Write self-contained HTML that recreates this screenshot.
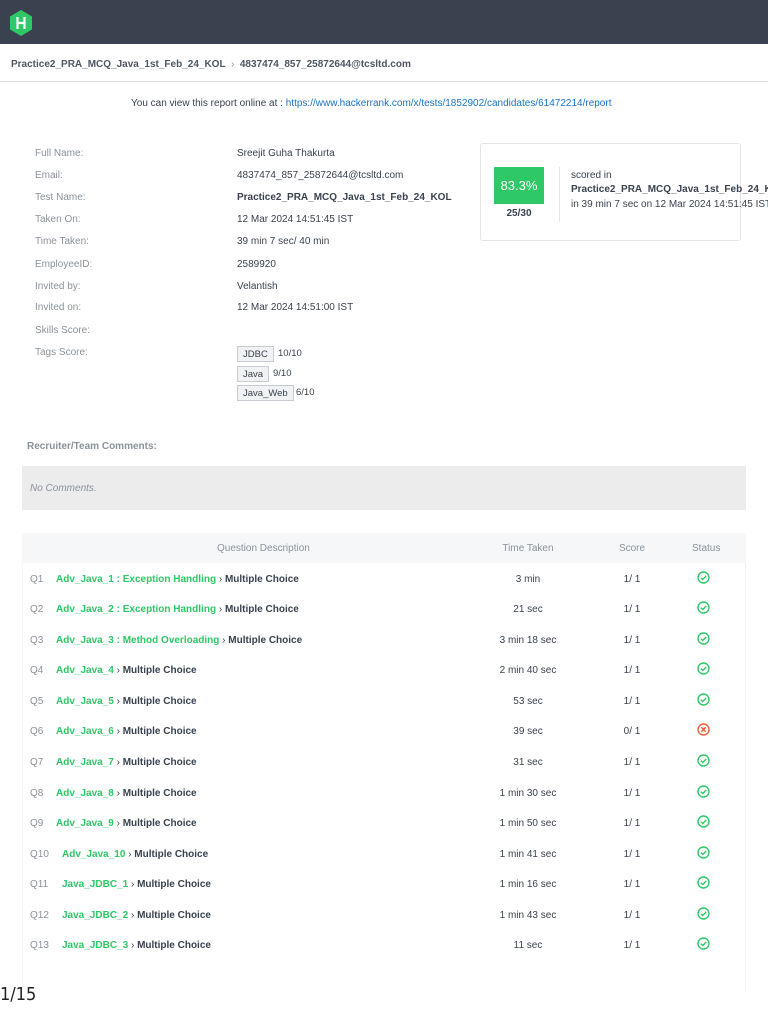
<!DOCTYPE html>
<html><head><meta charset="utf-8"><style>
*{margin:0;padding:0;box-sizing:border-box}
body{width:768px;height:1024px;position:relative;background:#fff;font-family:"Liberation Sans",Arial,sans-serif;overflow:hidden;color:#39424e}
.a{position:absolute;white-space:nowrap}
.hdr{left:0;top:0;width:768px;height:44px;background:#39424e}
.lbl{left:35px;font-size:10px;color:#8a929c}
.val{left:237px;font-size:10px;color:#39424e}
.tag{left:237px;height:16px;border:1px solid #c8cbcf;background:#f1f2f3;font-size:9.5px;padding:2px 5px;color:#39424e}
.tv{font-size:9.5px}
.row{left:22px;width:723px;height:30px;font-size:10px}
.q{position:absolute;left:8px;top:11px;color:#8a929c}
.t{position:absolute;top:11px;color:#2ec866;font-weight:bold}
.m{color:#39424e;font-weight:bold}
.tm{position:absolute;left:456px;width:100px;text-align:center;top:11px}
.sc{position:absolute;left:560px;width:100px;text-align:center;top:11px}
.st{position:absolute;left:675px;top:8px}
</style></head><body>
<div class="a hdr"></div>
<svg class="a" style="left:10px;top:10px" width="22" height="26" viewBox="0 0 22 26"><polygon points="11,0 22,6.5 22,19.5 11,26 0,19.5 0,6.5" fill="#2ec866"/><path d="M7.5 7v12M14.5 7v12M7.5 13h7" stroke="#fff" stroke-width="2.2"/></svg>
<div class="a" style="left:11px;top:59px;font-size:10px;font-weight:bold;color:#4d5661">Practice2_PRA_MCQ_Java_1st_Feb_24_KOL &nbsp;<span style="color:#8a929c;font-weight:normal">›</span>&nbsp; 4837474_857_25872644@tcsltd.com</div>
<div class="a" style="left:0;top:81px;width:768px;height:1px;background:#dcdfe3"></div>
<div class="a" style="left:131px;top:98px;font-size:10px;color:#39424e">You can view this report online at : <span style="color:#1a73c9">https://www.hackerrank.com/x/tests/1852902/candidates/61472214/report</span></div>

<div class="a lbl" style="top:148px">Full Name:</div><div class="a val" style="top:148px">Sreejit Guha Thakurta</div>
<div class="a lbl" style="top:170px">Email:</div><div class="a val" style="top:170px">4837474_857_25872644@tcsltd.com</div>
<div class="a lbl" style="top:192px">Test Name:</div><div class="a val" style="top:192px;font-weight:bold">Practice2_PRA_MCQ_Java_1st_Feb_24_KOL</div>
<div class="a lbl" style="top:214px">Taken On:</div><div class="a val" style="top:214px">12 Mar 2024 14:51:45 IST</div>
<div class="a lbl" style="top:236px">Time Taken:</div><div class="a val" style="top:236px">39 min 7 sec/ 40 min</div>
<div class="a lbl" style="top:259px">EmployeeID:</div><div class="a val" style="top:259px">2589920</div>
<div class="a lbl" style="top:281px">Invited by:</div><div class="a val" style="top:281px">Velantish</div>
<div class="a lbl" style="top:302px">Invited on:</div><div class="a val" style="top:302px">12 Mar 2024 14:51:00 IST</div>
<div class="a lbl" style="top:325px">Skills Score:</div>
<div class="a lbl" style="top:347px">Tags Score:</div>
<div class="a tag" style="top:346px">JDBC</div><div class="a tv" style="left:278px;top:348px">10/10</div>
<div class="a tag" style="top:366px">Java</div><div class="a tv" style="left:273px;top:368px">9/10</div>
<div class="a tag" style="top:385px">Java_Web</div><div class="a tv" style="left:296px;top:387px">6/10</div>

<div class="a" style="left:480px;top:143px;width:261px;height:98px;border:1px solid #e3e5e8;border-radius:3px"></div>
<div class="a" style="left:494px;top:167px;width:50px;height:37px;background:#2ec866;color:#fff;font-size:13px;text-align:center;line-height:37px">83.3%</div>
<div class="a" style="left:494px;top:208px;width:50px;text-align:center;font-size:10px;font-weight:bold">25/30</div>
<div class="a" style="left:559px;top:167px;width:1px;height:55px;background:#e3e5e8"></div>
<div class="a" style="left:571px;top:170px;font-size:10px">scored in</div>
<div class="a" style="left:571px;top:184px;font-size:10px;font-weight:bold">Practice2_PRA_MCQ_Java_1st_Feb_24_KOL</div>
<div class="a" style="left:571px;top:199px;font-size:10px">in 39 min 7 sec on 12 Mar 2024 14:51:45 IST</div>

<div class="a" style="left:27px;top:441px;font-size:10px;font-weight:bold;color:#8a929c">Recruiter/Team Comments:</div>
<div class="a" style="left:22px;top:466px;width:724px;height:44px;background:#ececed"></div>
<div class="a" style="left:30px;top:483px;font-size:10px;font-style:italic;color:#8a929c">No Comments.</div>

<div class="a" style="left:22px;top:533px;width:724px;height:457px;border-right:1px solid #f0f1f2;border-left:1px solid #f6f7f8"></div>
<div class="a" style="left:22px;top:533px;width:724px;height:30px;background:#f6f7f8;font-size:10px;color:#8a929c">
<span style="position:absolute;left:195px;top:10px">Question Description</span>
<span style="position:absolute;left:456px;width:100px;text-align:center;top:10px">Time Taken</span>
<span style="position:absolute;left:560px;width:100px;text-align:center;top:10px">Score</span>
<span style="position:absolute;left:670px;top:10px">Status</span></div>

<div class="a row" style="top:563px"><span class="q">Q1</span><span class="t" style="left:34px">Adv_Java_1 : Exception Handling<span style="color:#39424e;font-weight:normal"> › </span><span class="m">Multiple Choice</span></span><span class="tm">3 min</span><span class="sc">1/ 1</span><span class="st"><svg width="13" height="13" viewBox="0 0 13 13"><circle cx="6.5" cy="6.5" r="5.5" fill="none" stroke="#2ec866" stroke-width="1.4"/><path d="M4 6.7l1.8 1.8L9.2 5" fill="none" stroke="#2ec866" stroke-width="1.4"/></svg></span></div>
<div class="a row" style="top:593px"><span class="q">Q2</span><span class="t" style="left:34px">Adv_Java_2 : Exception Handling<span style="color:#39424e;font-weight:normal"> › </span><span class="m">Multiple Choice</span></span><span class="tm">21 sec</span><span class="sc">1/ 1</span><span class="st"><svg width="13" height="13" viewBox="0 0 13 13"><circle cx="6.5" cy="6.5" r="5.5" fill="none" stroke="#2ec866" stroke-width="1.4"/><path d="M4 6.7l1.8 1.8L9.2 5" fill="none" stroke="#2ec866" stroke-width="1.4"/></svg></span></div>
<div class="a row" style="top:624px"><span class="q">Q3</span><span class="t" style="left:34px">Adv_Java_3 : Method Overloading<span style="color:#39424e;font-weight:normal"> › </span><span class="m">Multiple Choice</span></span><span class="tm">3 min 18 sec</span><span class="sc">1/ 1</span><span class="st"><svg width="13" height="13" viewBox="0 0 13 13"><circle cx="6.5" cy="6.5" r="5.5" fill="none" stroke="#2ec866" stroke-width="1.4"/><path d="M4 6.7l1.8 1.8L9.2 5" fill="none" stroke="#2ec866" stroke-width="1.4"/></svg></span></div>
<div class="a row" style="top:654px"><span class="q">Q4</span><span class="t" style="left:34px">Adv_Java_4<span style="color:#39424e;font-weight:normal"> › </span><span class="m">Multiple Choice</span></span><span class="tm">2 min 40 sec</span><span class="sc">1/ 1</span><span class="st"><svg width="13" height="13" viewBox="0 0 13 13"><circle cx="6.5" cy="6.5" r="5.5" fill="none" stroke="#2ec866" stroke-width="1.4"/><path d="M4 6.7l1.8 1.8L9.2 5" fill="none" stroke="#2ec866" stroke-width="1.4"/></svg></span></div>
<div class="a row" style="top:685px"><span class="q">Q5</span><span class="t" style="left:34px">Adv_Java_5<span style="color:#39424e;font-weight:normal"> › </span><span class="m">Multiple Choice</span></span><span class="tm">53 sec</span><span class="sc">1/ 1</span><span class="st"><svg width="13" height="13" viewBox="0 0 13 13"><circle cx="6.5" cy="6.5" r="5.5" fill="none" stroke="#2ec866" stroke-width="1.4"/><path d="M4 6.7l1.8 1.8L9.2 5" fill="none" stroke="#2ec866" stroke-width="1.4"/></svg></span></div>
<div class="a row" style="top:715px"><span class="q">Q6</span><span class="t" style="left:34px">Adv_Java_6<span style="color:#39424e;font-weight:normal"> › </span><span class="m">Multiple Choice</span></span><span class="tm">39 sec</span><span class="sc">0/ 1</span><span class="st"><svg width="13" height="13" viewBox="0 0 13 13"><circle cx="6.5" cy="6.5" r="5.5" fill="none" stroke="#f25c3c" stroke-width="1.4"/><path d="M4.3 4.3l4.4 4.4M8.7 4.3l-4.4 4.4" stroke="#f25c3c" stroke-width="1.4"/></svg></span></div>
<div class="a row" style="top:746px"><span class="q">Q7</span><span class="t" style="left:34px">Adv_Java_7<span style="color:#39424e;font-weight:normal"> › </span><span class="m">Multiple Choice</span></span><span class="tm">31 sec</span><span class="sc">1/ 1</span><span class="st"><svg width="13" height="13" viewBox="0 0 13 13"><circle cx="6.5" cy="6.5" r="5.5" fill="none" stroke="#2ec866" stroke-width="1.4"/><path d="M4 6.7l1.8 1.8L9.2 5" fill="none" stroke="#2ec866" stroke-width="1.4"/></svg></span></div>
<div class="a row" style="top:777px"><span class="q">Q8</span><span class="t" style="left:34px">Adv_Java_8<span style="color:#39424e;font-weight:normal"> › </span><span class="m">Multiple Choice</span></span><span class="tm">1 min 30 sec</span><span class="sc">1/ 1</span><span class="st"><svg width="13" height="13" viewBox="0 0 13 13"><circle cx="6.5" cy="6.5" r="5.5" fill="none" stroke="#2ec866" stroke-width="1.4"/><path d="M4 6.7l1.8 1.8L9.2 5" fill="none" stroke="#2ec866" stroke-width="1.4"/></svg></span></div>
<div class="a row" style="top:807px"><span class="q">Q9</span><span class="t" style="left:34px">Adv_Java_9<span style="color:#39424e;font-weight:normal"> › </span><span class="m">Multiple Choice</span></span><span class="tm">1 min 50 sec</span><span class="sc">1/ 1</span><span class="st"><svg width="13" height="13" viewBox="0 0 13 13"><circle cx="6.5" cy="6.5" r="5.5" fill="none" stroke="#2ec866" stroke-width="1.4"/><path d="M4 6.7l1.8 1.8L9.2 5" fill="none" stroke="#2ec866" stroke-width="1.4"/></svg></span></div>
<div class="a row" style="top:838px"><span class="q">Q10</span><span class="t" style="left:40px">Adv_Java_10<span style="color:#39424e;font-weight:normal"> › </span><span class="m">Multiple Choice</span></span><span class="tm">1 min 41 sec</span><span class="sc">1/ 1</span><span class="st"><svg width="13" height="13" viewBox="0 0 13 13"><circle cx="6.5" cy="6.5" r="5.5" fill="none" stroke="#2ec866" stroke-width="1.4"/><path d="M4 6.7l1.8 1.8L9.2 5" fill="none" stroke="#2ec866" stroke-width="1.4"/></svg></span></div>
<div class="a row" style="top:868px"><span class="q">Q11</span><span class="t" style="left:40px">Java_JDBC_1<span style="color:#39424e;font-weight:normal"> › </span><span class="m">Multiple Choice</span></span><span class="tm">1 min 16 sec</span><span class="sc">1/ 1</span><span class="st"><svg width="13" height="13" viewBox="0 0 13 13"><circle cx="6.5" cy="6.5" r="5.5" fill="none" stroke="#2ec866" stroke-width="1.4"/><path d="M4 6.7l1.8 1.8L9.2 5" fill="none" stroke="#2ec866" stroke-width="1.4"/></svg></span></div>
<div class="a row" style="top:899px"><span class="q">Q12</span><span class="t" style="left:40px">Java_JDBC_2<span style="color:#39424e;font-weight:normal"> › </span><span class="m">Multiple Choice</span></span><span class="tm">1 min 43 sec</span><span class="sc">1/ 1</span><span class="st"><svg width="13" height="13" viewBox="0 0 13 13"><circle cx="6.5" cy="6.5" r="5.5" fill="none" stroke="#2ec866" stroke-width="1.4"/><path d="M4 6.7l1.8 1.8L9.2 5" fill="none" stroke="#2ec866" stroke-width="1.4"/></svg></span></div>
<div class="a row" style="top:929px"><span class="q">Q13</span><span class="t" style="left:40px">Java_JDBC_3<span style="color:#39424e;font-weight:normal"> › </span><span class="m">Multiple Choice</span></span><span class="tm">11 sec</span><span class="sc">1/ 1</span><span class="st"><svg width="13" height="13" viewBox="0 0 13 13"><circle cx="6.5" cy="6.5" r="5.5" fill="none" stroke="#2ec866" stroke-width="1.4"/><path d="M4 6.7l1.8 1.8L9.2 5" fill="none" stroke="#2ec866" stroke-width="1.4"/></svg></span></div>

<div class="a" style="left:0;top:984px;font-size:18px;color:#222;font-family:'DejaVu Sans Condensed','DejaVu Sans',sans-serif">1/15</div>
</body></html>
